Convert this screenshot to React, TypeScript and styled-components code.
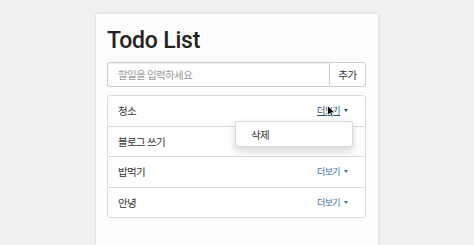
import React from "react";
import styled, { createGlobalStyle } from "styled-components";

const Global = createGlobalStyle`
  html, body { margin: 0; padding: 0; }
  body {
    background: #f0f0f0;
    font-family: "Liberation Sans", "Noto Sans CJK KR", sans-serif;
    color: #333;
    overflow: hidden;
  }
`;

const KR = `"Noto Sans CJK KR", "Liberation Sans", sans-serif`;

const Page = styled.div`
  padding-top: 14px;
  height: 245px;
  box-sizing: border-box;
`;

const Card = styled.div`
  width: 282px;
  height: 260px;
  margin: 0 auto;
  background: #fdfdfd;
  box-shadow: 0 0 3px rgba(0, 0, 0, 0.12);
  box-sizing: border-box;
  padding: 14px 12px 0 11px;
`;

const Title = styled.h1`
  margin: 0 0 8px;
  font-family: Roboto, "Liberation Sans", sans-serif;
  font-weight: 500;
  font-size: 23px;
  line-height: 26px;
  color: #222;
  letter-spacing: -0.2px;
`;

const InputGroup = styled.div`
  display: flex;
  height: 25px;
`;

const TextInput = styled.input`
  flex: 1;
  min-width: 0;
  box-sizing: border-box;
  height: 25px;
  border: 1px solid #ccc;
  border-right: none;
  border-radius: 3px 0 0 3px;
  padding: 0 10px;
  font-family: ${KR};
  font-size: 10.5px;
  letter-spacing: -0.6px;
  background: #fff;
  box-shadow: inset 0 1px 1px rgba(0, 0, 0, 0.05);
  &::placeholder { color: #9a9a9a; }
  &:focus { outline: none; }
`;

const AddButton = styled.button`
  width: 37px;
  height: 25px;
  box-sizing: border-box;
  border: 1px solid #ccc;
  border-radius: 0 3px 3px 0;
  background: #fff;
  font-family: ${KR};
  font-size: 10.5px;
  letter-spacing: -0.5px;
  color: #333;
  padding: 0;
`;

const List = styled.ul`
  list-style: none;
  margin: 8px 0 0;
  padding: 0;
  border: 1px solid #ddd;
  border-radius: 3px;
  background: #fff;
`;

const Row = styled.li`
  position: relative;
  display: flex;
  align-items: center;
  justify-content: space-between;
  height: 29.5px;
  padding: 0 17px 0 10px;
  font-family: ${KR};
  font-size: 10.5px;
  letter-spacing: -0.6px;
  color: #333;
  & + & { border-top: 1px solid #ddd; }
`;

const More = styled.span<{ $hover?: boolean }>`
  position: relative;
  display: flex;
  align-items: center;
  gap: 2px;
  font-size: 9px;
  letter-spacing: -0.6px;
  color: ${(p) => (p.$hover ? "#23527c" : "#3f72a8")};
  text-decoration: ${(p) => (p.$hover ? "underline" : "none")};
`;

const Caret = styled.span`
  width: 0;
  height: 0;
  border-left: 2.5px solid transparent;
  border-right: 2.5px solid transparent;
  border-top: 3px solid currentColor;
  margin-left: 2px;
`;

const Menu = styled.div`
  position: absolute;
  top: 25px;
  right: 12px;
  width: 118px;
  height: 26px;
  box-sizing: border-box;
  background: #fff;
  border: 1px solid rgba(0, 0, 0, 0.15);
  border-radius: 3px;
  box-shadow: 0 4px 8px rgba(0, 0, 0, 0.17);
  display: flex;
  align-items: center;
  padding-left: 15px;
  font-size: 10.5px;
  color: #333;
  z-index: 2;
`;

const Cursor = styled.svg`
  position: absolute;
  left: 10px;
  top: 1px;
  z-index: 3;
`;

const items = ["청소", "블로그 쓰기", "밥먹기", "안녕"];

export default function App() {
  return (
    <>
      <Global />
      <Page>
        <Card>
          <Title>Todo List</Title>
          <InputGroup>
            <TextInput placeholder="할일을 입력하세요" />
            <AddButton>추가</AddButton>
          </InputGroup>
          <List>
            {items.map((t, i) => (
              <Row key={t}>
                <span>{t}</span>
                {i !== 1 && (
                  <More $hover={i === 0}>
                    더보기
                    <Caret />
                    {i === 0 && (
                      <Cursor width="9" height="13" viewBox="0 0 9 13">
                        <path
                          d="M0.5 0.5 L0.5 10.5 L3 8.2 L4.6 12 L6.2 11.3 L4.7 7.7 L8 7.7 Z"
                          fill="#111"
                          stroke="#fff"
                          strokeWidth="0.8"
                          strokeLinejoin="round"
                        />
                      </Cursor>
                    )}
                  </More>
                )}
                {i === 0 && <Menu>삭제</Menu>}
              </Row>
            ))}
          </List>
        </Card>
      </Page>
    </>
  );
}
